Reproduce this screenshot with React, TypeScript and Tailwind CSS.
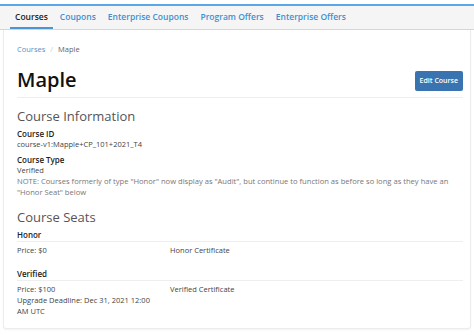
import React from "react";

const TABS = ["Courses", "Coupons", "Enterprise Coupons", "Program Offers", "Enterprise Offers"];

const SEATS = [
  { name: "Honor", lines: ["Price: $0"], cert: "Honor Certificate" },
  { name: "Verified", lines: ["Price: $100", "Upgrade Deadline: Dec 31, 2021 12:00 AM UTC"], cert: "Verified Certificate" },
];

export default function App() {
  return (
    <div className="h-[335px] w-[474px] overflow-hidden bg-white pt-[4px] text-[#333] [font-family:'Open_Sans',sans-serif]">
      <nav className="flex h-[26px] items-stretch gap-[2px] border-t-2 border-b border-t-[#5aa6e6] border-b-[#d6d6d6] bg-[#f5f5f5] pl-[10px]">
        {TABS.map((t, i) => (
          <a
            key={t}
            className={
              "flex items-center border-b-2 px-[5px] pt-[1px] text-[8.5px] font-semibold " +
              (i === 0 ? "border-[#4b95d6] text-[#222]" : "border-transparent text-[#3f8fd2]")
            }
          >
            {t}
          </a>
        ))}
      </nav>
      <div className="mx-[3px] h-[299px] rounded-b-[3px] border-x border-b border-[#ececec] pl-[13px] pr-[7px] pt-[13px] shadow-[0_1px_2px_rgba(0,0,0,0.05)]">
        <div className="flex items-center gap-[5px] text-[7.5px] leading-[12px]">
          <span className="text-[#5b8fc2]">Courses</span>
          <span className="text-[#ccc]">/</span>
          <span className="text-[#666]">Maple</span>
        </div>
        <div className="mt-[11px] flex items-center justify-between border-b border-[#eee] pb-[3px]">
          <h1 className="text-[20px] font-semibold leading-[28px] text-[#111]">Maple</h1>
          <button className="mt-[2px] h-[20px] rounded-[2px] bg-[#3a74b0] px-[5px] text-[7px] font-semibold text-white">Edit Course</button>
        </div>
        <h2 className="mt-[9px] text-[13px] leading-[18px] text-[#555]">Course Information</h2>
        <div className="mt-[3px] text-[7.5px] leading-[11px]">
          <div className="text-[8px] font-semibold text-[#222]">Course ID</div>
          <div className="text-[#444]">course-v1:Mapple+CP_101+2021_T4</div>
          <div className="mt-[4px] text-[8px] font-semibold text-[#222]">Course Type</div>
          <div className="text-[#444]">Verified</div>
          <p className="text-[7.6px] text-[#777]">
            NOTE: Courses formerly of type "Honor" now display as "Audit", but continue to function as before so long as they have an
            "Honor Seat" below
          </p>
        </div>
        <h2 className="mt-[10px] text-[13px] leading-[18px] text-[#555]">Course Seats</h2>
        <div className="mt-[3px] text-[7.5px] leading-[11px]">
          {SEATS.map((s) => (
            <div key={s.name} className="mb-[12px]">
              <div className="border-b border-[#eee] pb-[1px] text-[8px] font-semibold text-[#222]">{s.name}</div>
              <div className="flex pt-[3px] text-[#444]">
                <div className="w-[153px] pr-[12px]">
                  {s.lines.map((l) => (
                    <div key={l}>{l}</div>
                  ))}
                </div>
                <div>{s.cert}</div>
              </div>
            </div>
          ))}
        </div>
      </div>
    </div>
  );
}
